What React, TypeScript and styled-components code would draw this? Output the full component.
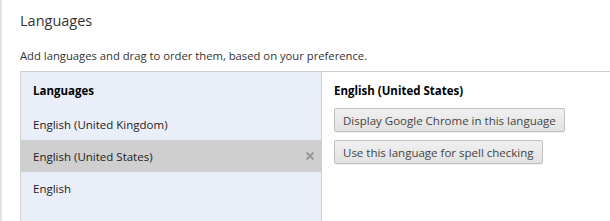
import React from "react";
import styled, { createGlobalStyle } from "styled-components";

const Global = createGlobalStyle`
  html, body { margin: 0; padding: 0; background: #fff; }
  body { font-family: "Open Sans", "Noto Sans", sans-serif; color: #303030; overflow: hidden; }
`;

const Page = styled.div`
  width: 610px;
  height: 221px;
  box-sizing: border-box;
  border-left: 2px solid #e4e4e4;
  padding: 0 0 0 18px;
  display: flex;
  flex-direction: column;
  overflow: hidden;
`;

const Title = styled.h1`
  margin: 11px 0 0 0;
  font-size: 14.5px;
  font-weight: 400;
  line-height: 20px;
  color: #333;
`;

const Subtitle = styled.p`
  margin: 17px 0 0 0;
  font-size: 11.25px;
  line-height: 16px;
  color: #333;
`;

const Panel = styled.div`
  margin-top: 7px;
  flex: 1;
  display: flex;
  border-top: 1px solid #d0d0d0;
  border-left: 1px solid #d0d0d0;
`;

const List = styled.div`
  width: 300px;
  background: #eaeef8;
  border-right: 1px solid #d0d0d0;
  display: flex;
  flex-direction: column;
`;

const ListHeader = styled.div`
  height: 36px;
  display: flex;
  align-items: center;
  padding-left: 12px;
  font-weight: 700;
  font-size: 11.5px;
  color: #000;
`;

const Row = styled.div<{ $selected?: boolean }>`
  height: 32px;
  display: flex;
  align-items: center;
  justify-content: space-between;
  padding: 0 6px 0 12px;
  font-size: 11.5px;
  color: #222;
  background: ${(p) => (p.$selected ? "#cfcfcf" : "transparent")};
`;

const Close = styled.span`
  display: flex;
  align-items: center;
`;

const Detail = styled.div`
  flex: 1;
  padding: 0 0 0 12px;
  display: flex;
  flex-direction: column;
  align-items: flex-start;
`;

const DetailHeader = styled.div`
  height: 36px;
  display: flex;
  align-items: center;
  font-weight: 700;
  font-size: 11.5px;
  color: #000;
`;

const Buttons = styled.div`
  display: flex;
  flex-direction: column;
  align-items: flex-start;
  gap: 8px;
`;

const Button = styled.button`
  height: 24px;
  box-sizing: border-box;
  padding: 0 8px;
  border: 1px solid #c0c0c0;
  border-radius: 2px;
  background: linear-gradient(#f0f0f0, #e2e2e2);
  box-shadow: 0 1px 0 rgba(0, 0, 0, 0.06);
  font-family: inherit;
  font-size: 11.5px;
  color: #444;
`;

const langs = ["English (United Kingdom)", "English (United States)", "English"];

export default function App() {
  return (
    <>
      <Global />
      <Page>
        <Title>Languages</Title>
        <Subtitle>Add languages and drag to order them, based on your preference.</Subtitle>
        <Panel>
          <List>
            <ListHeader>Languages</ListHeader>
            {langs.map((l) => (
              <Row key={l} $selected={l === "English (United States)"}>
                {l}
                {l === "English (United States)" && (
                  <Close>
                    <svg width="10" height="10" viewBox="0 0 10 10">
                      <path d="M1.5 1.5 L8.5 8.5 M8.5 1.5 L1.5 8.5" stroke="#9a9a9a" strokeWidth="2" />
                    </svg>
                  </Close>
                )}
              </Row>
            ))}
          </List>
          <Detail>
            <DetailHeader>English (United States)</DetailHeader>
            <Buttons>
              <Button>Display Google Chrome in this language</Button>
              <Button>Use this language for spell checking</Button>
            </Buttons>
          </Detail>
        </Panel>
      </Page>
    </>
  );
}
